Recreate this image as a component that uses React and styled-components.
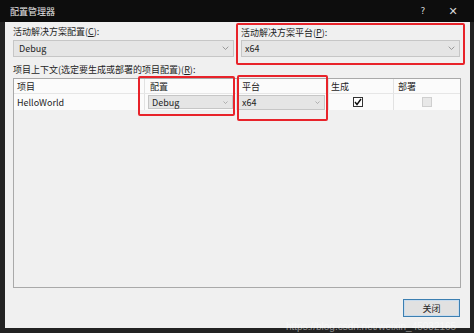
import React from "react";
import styled, { createGlobalStyle } from "styled-components";

const Global = createGlobalStyle`
  html, body { margin: 0; padding: 0; background: #1c1c1c; }
  * { box-sizing: border-box; }
`;

const FONT = `"Noto Sans CJK SC", "Noto Sans", "Liberation Sans", sans-serif`;

const Frame = styled.div`
  width: 474px;
  height: 333px;
  background: #222222;
  display: flex;
  flex-direction: column;
  padding: 0 4px 5px 5px;
  font-family: ${FONT};
  font-size: 9px;
  color: #1e1e1e;
  overflow: hidden;
`;

const TitleBar = styled.div`
  height: 22px;
  margin: 0 -4px 0 -5px;
  background: #0d0d0d;
  display: flex;
  align-items: center;
  padding: 0 6px 0 10px;
  color: #e6e6e6;
  font-size: 9px;
`;

const Title = styled.span`
  flex: 1;
`;

const TitleBtn = styled.span`
  width: 30px;
  text-align: center;
  color: #d8d8d8;
  font-family: "DejaVu Sans", sans-serif;
  font-size: ${(p) => p.$size || 10}px;
`;

const Body = styled.div`
  flex: 1;
  background: #f0f0f0;
  display: flex;
  flex-direction: column;
  padding: 0 9px 0 8px;
  position: relative;
`;

const TopRow = styled.div`
  display: grid;
  grid-template-columns: 221px 1fr;
  column-gap: 2px;
  margin-top: 1px;
  margin-right: -4px;
`;

const Field = styled.div`
  display: flex;
  flex-direction: column;
  padding-top: 3px;
`;

const Highlight = styled.div`
  border: 2px solid #e8232a;
  border-radius: 2px;
  padding: 2px 3px 6px 3px;
  display: flex;
  flex-direction: column;
`;

const Label = styled.div`
  height: 12px;
  line-height: 12px;
  margin-bottom: ${(p) => p.$mb ?? 2}px;
  white-space: nowrap;
`;

const Select = styled.div`
  flex: ${(p) => (p.$grow ? 1 : "none")};
  height: ${(p) => p.$h || 17}px;
  background: #e5e5e5;
  border: 1px solid #c6c6c6;
  display: flex;
  align-items: center;
  padding: 0 4px 0 ${(p) => p.$pl ?? 5}px;
  font-size: 9px;
  color: #1e1e1e;
`;

const SelectText = styled.span`
  flex: 1;
`;

const Chevron = ({ size = 7 }) => (
  <svg width={size} height={size * 0.6} viewBox="0 0 10 6">
    <polyline points="1,1 5,5 9,1" fill="none" stroke="#8a8a8a" strokeWidth="1.2" />
  </svg>
);

const SectionLabel = styled(Label)`
  margin-top: -1px;
  margin-bottom: 2px;
`;

const Table = styled.div`
  height: 210px;
  border: 1px solid #a9a9a9;
  background: #f0f0f0;
  position: relative;
`;

const Row = styled.div`
  display: grid;
  grid-template-columns: 131px 92px 92px 65px 1fr;
  height: ${(p) => p.$h}px;
  background: #fbfbfb;
  border-bottom: 1px solid ${(p) => (p.$head ? "#e6e6e6" : "#f0f0f0")};
`;

const Cell = styled.div`
  display: flex;
  align-items: center;
  justify-content: ${(p) => (p.$center ? "center" : "flex-start")};
  padding: ${(p) => p.$pad || "0 3px"};
  border-right: 1px solid ${(p) => (p.$sep ? "#e2e2e2" : "transparent")};
  white-space: nowrap;
`;

const Mark = styled.div`
  position: absolute;
  left: ${(p) => p.$x}px;
  top: ${(p) => p.$y}px;
  width: ${(p) => p.$w}px;
  height: ${(p) => p.$h}px;
  border: 2px solid #e8232a;
  border-radius: 2px;
  pointer-events: none;
`;

const Check = styled.div`
  width: 10px;
  height: 10px;
  border: 1px solid ${(p) => (p.$disabled ? "#cfcfcf" : "#333")};
  background: ${(p) => (p.$disabled ? "#e8e8e8" : "#fff")};
  display: flex;
  align-items: center;
  justify-content: center;
`;

const Footer = styled.div`
  display: flex;
  justify-content: flex-end;
  margin-top: 11px;
  margin-right: 1px;
`;

const Button = styled.div`
  width: 57px;
  height: 18px;
  border: 1px solid #3c7fb1;
  box-shadow: inset 0 0 0 1px #c8dcee;
  background: #e1e1e1;
  display: flex;
  align-items: center;
  justify-content: center;
  font-size: 9px;
`;

const Watermark = styled.div`
  position: absolute;
  left: 281px;
  bottom: -4px;
  color: rgba(255, 255, 255, 0.5);
  font-family: "Liberation Sans", sans-serif;
  font-size: 10px;
  white-space: nowrap;
  pointer-events: none;
`;

export default function App() {
  return (
    <>
      <Global />
      <Frame>
        <TitleBar>
          <Title>配置管理器</Title>
          <TitleBtn $size={9}>?</TitleBtn>
          <TitleBtn $size={11}>✕</TitleBtn>
        </TitleBar>
        <Body>
          <TopRow>
            <Field>
              <Label>活动解决方案配置(<u>C</u>):</Label>
              <Select>
                <SelectText>Debug</SelectText>
                <Chevron />
              </Select>
            </Field>
            <Highlight>
              <Label $mb={1}>活动解决方案平台(<u>P</u>):</Label>
              <Select $pl={3}>
                <SelectText>x64</SelectText>
                <Chevron />
              </Select>
            </Highlight>
          </TopRow>
          <SectionLabel>项目上下文(选定要生成或部署的项目配置)(<u>R</u>):</SectionLabel>
          <Table>
            <Row $head $h={15}>
              <Cell $sep>项目</Cell>
              <Cell $sep $pad="0 5px">配置</Cell>
              <Cell $sep $pad="0 5px">平台</Cell>
              <Cell $sep $pad="0 2px">生成</Cell>
              <Cell $pad="0 4px">部署</Cell>
            </Row>
            <Row $h={17}>
              <Cell $sep>HelloWorld</Cell>
              <Cell $sep $pad="0 3px 0 3px">
                <Select $grow $h={14} $pl={3}>
                  <SelectText>Debug</SelectText>
                  <Chevron size={5} />
                </Select>
              </Cell>
              <Cell $sep $pad="0 3px 0 1px">
                <Select $grow $h={15} $pl={3}>
                  <SelectText>x64</SelectText>
                  <Chevron size={5} />
                </Select>
              </Cell>
              <Cell $sep $center $pad="0 6px 0 0">
                <Check>
                  <svg width="8" height="8" viewBox="0 0 8 8">
                    <polyline points="1,4 3,6.5 7,1" fill="none" stroke="#111" strokeWidth="1.4" />
                  </svg>
                </Check>
              </Cell>
              <Cell $center>
                <Check $disabled />
              </Cell>
            </Row>
            <Mark $x={124} $y={-3} $w={97} $h={40} />
            <Mark $x={223} $y={-4} $w={91} $h={46} />
          </Table>
          <Footer>
            <Button>关闭</Button>
          </Footer>
          <Watermark>https://blog.csdn.net/weixin_45032165</Watermark>
        </Body>
      </Frame>
    </>
  );
}
